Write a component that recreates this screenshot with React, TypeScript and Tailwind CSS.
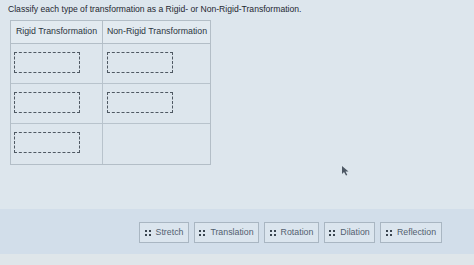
import React from "react";

function Grip() {
  return (
    <svg width="6" height="6" viewBox="0 0 6 6" className="shrink-0">
      <rect x="0" y="0" width="2" height="2" fill="#3a4550" />
      <rect x="4" y="0" width="2" height="2" fill="#3a4550" />
      <rect x="0" y="4" width="2" height="2" fill="#3a4550" />
      <rect x="4" y="4" width="2" height="2" fill="#3a4550" />
    </svg>
  );
}

function Slot() {
  return <div className="w-[66px] h-[21px] border-[1.5px] border-dashed border-[#4f5963]" />;
}

const chips = [
  { label: "Stretch", w: "w-[50px]" },
  { label: "Translation", w: "w-[65px]" },
  { label: "Rotation", w: "w-[55px]" },
  { label: "Dilation", w: "w-[51px]" },
  { label: "Reflection", w: "w-[62px]" },
];

export default function App() {
  return (
    <div
      className="relative w-[474px] h-[265px] bg-[#dde6ed] overflow-hidden text-[#2f3a44]"
      style={{ fontFamily: "'Liberation Sans', Arial, sans-serif" }}
    >
      <div className="pl-[8px] pt-[3px] text-[8.6px] leading-[12px] text-[#1f2831]">
        Classify each type of transformation as a Rigid- or Non-Rigid-Transformation.
      </div>
      <div className="ml-[10px] mt-[5px] w-[201px] border border-[#b3bec7]">
        <div className="grid grid-cols-[92px_108px] h-[23px] border-b border-[#b3bec7] bg-[#e2eaf0]">
          <div className="flex items-center justify-center border-r border-[#b3bec7] text-[8.8px] text-[#2c363f]">
            Rigid Transformation
          </div>
          <div className="flex items-center justify-center text-[8.8px] text-[#2c363f]">
            Non-Rigid Transformation
          </div>
        </div>
        {[0, 1, 2].map((r) => (
          <div
            key={r}
            className={`grid grid-cols-[92px_108px] h-[40px] ${r < 2 ? "border-b border-[#b8c3cc]" : ""}`}
          >
            <div className="border-r border-[#b8c3cc] pl-[3px] pt-[8px]">
              <Slot />
            </div>
            <div className="pl-[4px] pt-[8px]">{r < 2 ? <Slot /> : null}</div>
          </div>
        ))}
      </div>
      <div className="absolute left-0 right-0 top-[209px] h-[45px] bg-[#d2deea]">
        <div className="flex justify-end gap-[5px] pr-[32px] pt-[13px]">
          {chips.map((c) => (
            <div
              key={c.label}
              className={`${c.w} h-[21px] flex items-center justify-center gap-[5px] border border-[#a9b6c2] bg-[#dbe5ee] text-[8.8px] text-[#52606e]`}
            >
              <Grip />
              <span>{c.label}</span>
            </div>
          ))}
        </div>
      </div>
      <div className="absolute left-0 right-0 top-[254px] bottom-0 bg-[#dfe6ea]" />
      <svg className="absolute left-[342px] top-[166px]" width="8" height="10" viewBox="0 0 8 10">
        <path d="M0 0 L0 8 L2 6 L4 9.5 L5.3 9 L3.5 5.5 L6.5 5.5 Z" fill="#4d5864" />
      </svg>
    </div>
  );
}
